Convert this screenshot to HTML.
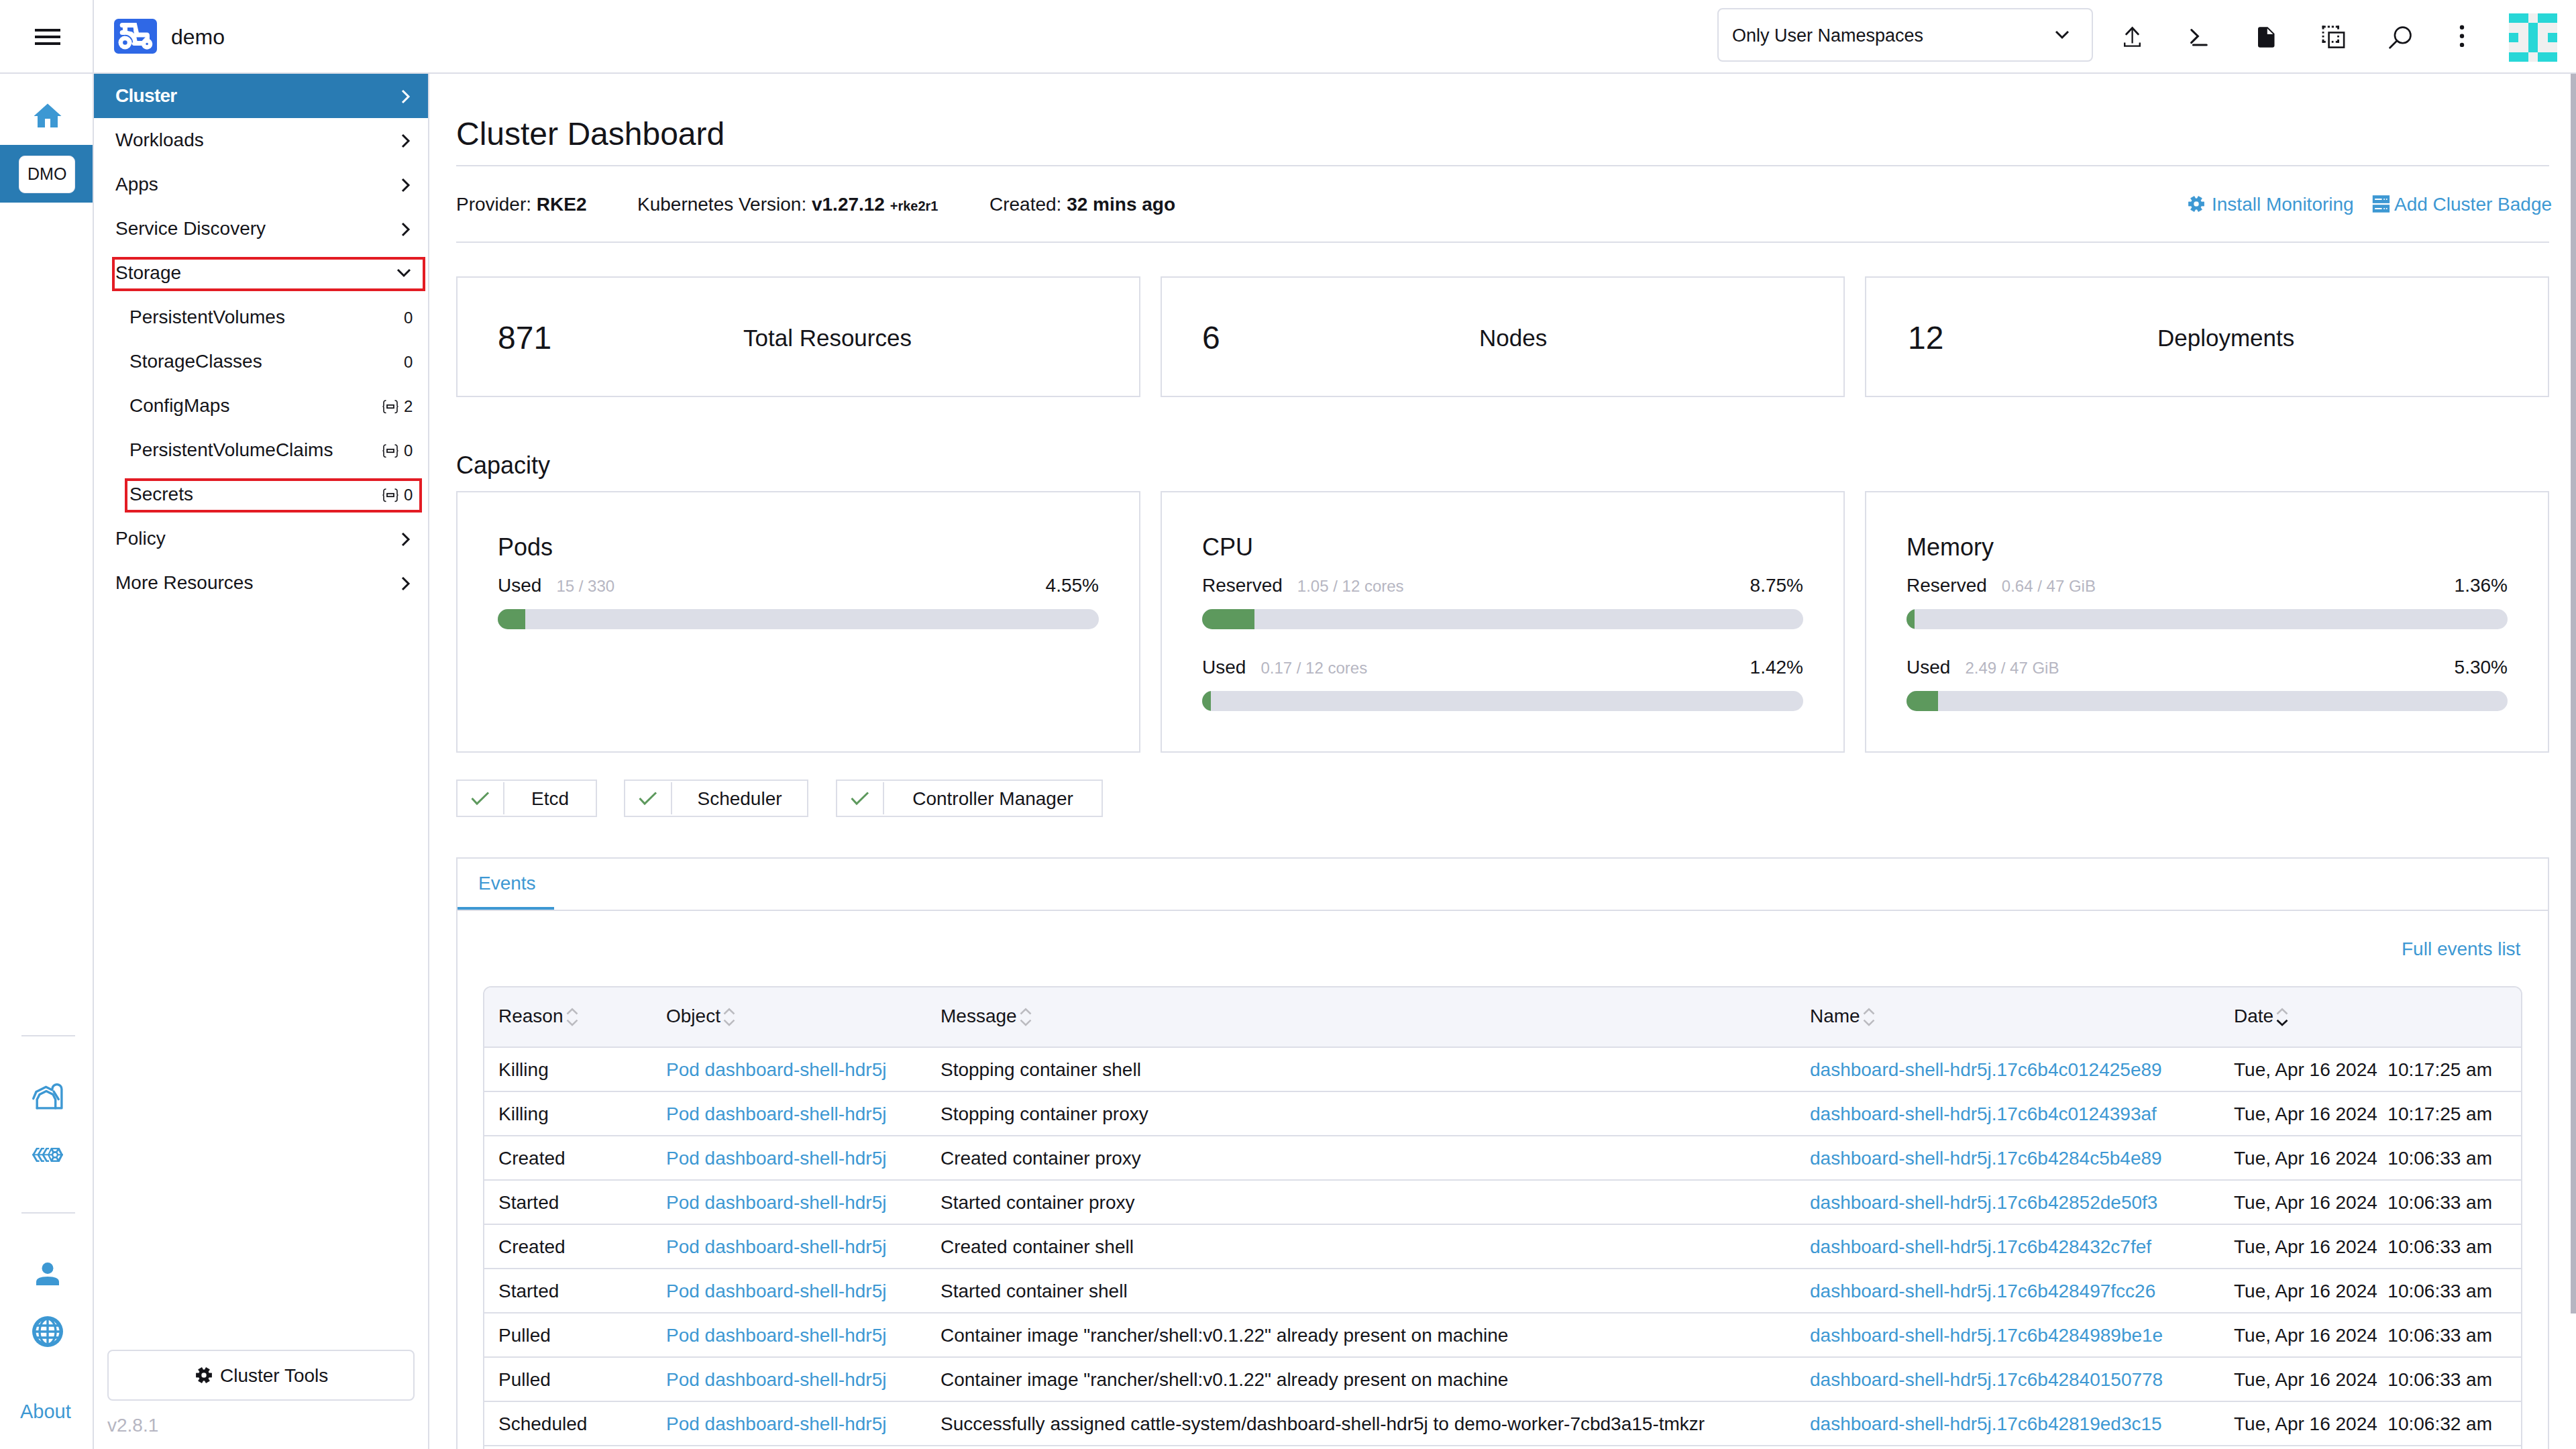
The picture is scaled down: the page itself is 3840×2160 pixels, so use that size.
<!DOCTYPE html>
<html><head><meta charset="utf-8">
<style>
*{box-sizing:border-box;margin:0;padding:0}
html,body{width:3840px;height:2160px;overflow:hidden;background:#fff}
body{position:relative;font-family:"Liberation Sans",sans-serif;color:#141419}
.a{position:absolute}
.t{position:absolute;white-space:nowrap;line-height:1}
.f28{font-size:28px}
.blue{color:#3d98d3}
.bd{border:2px solid #dcdee7}
svg{position:absolute;overflow:visible}
</style></head><body>
<!-- HEADER -->
<div class="a" style="left:0;top:108px;width:3840px;height:2px;background:#dcdee7"></div>
<div class="a" style="left:138px;top:0;width:2px;height:2160px;background:#dcdee7"></div>
<div class="a" style="left:52px;top:43px;width:38px;height:4px;background:#141419"></div>
<div class="a" style="left:52px;top:53px;width:38px;height:4px;background:#141419"></div>
<div class="a" style="left:52px;top:63px;width:38px;height:4px;background:#141419"></div>
<!-- logo -->
<svg style="left:170px;top:28px" width="64" height="52" viewBox="0 0 64 52">
<rect x="0" y="0" width="64" height="52" rx="6.5" fill="#2f68e6"/>
<g fill="#fff">
<rect x="8.7" y="5.9" width="25" height="7.1" rx="3.5"/>
<rect x="12.9" y="10" width="7.1" height="9"/>
<rect x="8.7" y="17" width="24" height="7" rx="3.5"/>
<polygon points="27.5,5.9 33.6,5.9 37,21 30,22"/>
<path d="M20,19 L36,20.5 L49,20.5 Q53,20.5 53,25 L53,34 L44,40 L30,40 Q26,40 26,34 Q26,26 16,24 Z"/>
<circle cx="16.4" cy="35.5" r="9.9"/>
<circle cx="49.1" cy="37.5" r="8.2"/>
</g>
<g fill="#2f68e6">
<circle cx="16.4" cy="35.5" r="3.3"/>
<circle cx="49.1" cy="37.5" r="1.8"/>
<polygon points="33.4,27.6 46.7,27.6 41.5,32.9 34.6,32.9"/>
<polygon points="20,13 28,13 30,22 27,19.5 20,18"/>
</g>
<path d="M16.4,24.6 A11,11 0 0 1 27.4,35.5" stroke="#2f68e6" stroke-width="1.6" fill="none"/>
</svg>
<div class="t" style="left:255px;top:39px;font-size:32px">demo</div>

<!-- namespace filter -->
<div class="a bd" style="left:2560px;top:12px;width:560px;height:80px;border-radius:8px"></div>
<div class="t" style="left:2582px;top:40px;font-size:27px">Only User Namespaces</div>
<svg style="left:3062px;top:44px" width="24" height="16"><path d="M3,3 L12,12 L21,3" stroke="#141419" stroke-width="3" fill="none"/></svg>

<!-- header icons -->
<svg style="left:3164px;top:38px" width="30" height="34"><g stroke="#141419" fill="none"><path d="M14.6,4 V26.5" stroke-width="2.3"/><path d="M5.6,13 L14.6,3.6 L23.4,13" stroke-width="2.8" stroke-linecap="round"/><path d="M3.2,25.6 V30.6 H25.8 V25.6" stroke-width="2.4"/></g></svg>
<svg style="left:3263px;top:41px" width="30" height="30"><g stroke="#141419" stroke-width="3" fill="none" stroke-linecap="round"><path d="M3.8,3.6 L13.4,12.9 L3.6,22.6"/><path d="M6.4,26 H26.3"/></g></svg>
<svg style="left:3365px;top:39px" width="28" height="34"><path d="M3.9,1.2 H15.4 L25.5,11.3 V28.8 Q25.5,31.8 22.5,31.8 H4 Q1,31.8 1,28.8 V4.2 Q1,1.2 3.9,1.2 Z" fill="#141419"/><path d="M14.8,3.4 V12 H23.4 Z" fill="#fff"/></svg>
<svg style="left:3459px;top:37px" width="38" height="38"><g fill="#141419"><rect x="2.6" y="1.4" width="5.2" height="2.9"/><rect x="2.6" y="1.4" width="2.9" height="5.2"/><rect x="10.8" y="1.4" width="3.2" height="2.9"/><rect x="16.8" y="1.4" width="3.2" height="2.9"/><rect x="22.8" y="1.4" width="5.2" height="2.9"/><rect x="25.1" y="1.4" width="2.9" height="5.2"/><rect x="2.6" y="10.2" width="2.9" height="2.5"/><rect x="2.6" y="16" width="2.9" height="2.6"/><rect x="2.6" y="21.8" width="2.9" height="5.0"/><rect x="2.6" y="23.9" width="5.2" height="2.9"/><rect x="25.1" y="16" width="2.9" height="2.6"/><rect x="25.1" y="21.8" width="2.9" height="5.0"/><rect x="22.8" y="23.9" width="5.2" height="2.9"/><rect x="16.8" y="23.9" width="2.7" height="2.9"/></g><rect x="12.6" y="11.5" width="22.5" height="22.1" fill="none" stroke="#141419" stroke-width="2.6"/></svg>
<svg style="left:3559px;top:36px" width="40" height="38"><g fill="none" stroke="#141419" stroke-width="2.6"><circle cx="22.7" cy="16.4" r="11.8"/><path d="M13.6,25.2 L3.6,35.2" stroke-width="2.8" stroke-linecap="round"/></g></svg>
<svg style="left:3664px;top:36px" width="14" height="38"><g fill="#141419"><circle cx="6" cy="4.7" r="3.2"/><circle cx="6" cy="17.8" r="3.2"/><circle cx="6" cy="30.9" r="3.2"/></g></svg>
<!-- avatar -->
<svg style="left:3740px;top:20px" width="72" height="72" viewBox="0 0 5 5" shape-rendering="crispEdges">
<rect width="5" height="5" fill="#f0f0f0"/>
<g fill="#28d7d7">
<rect x="0" y="0" width="2" height="1"/><rect x="3" y="0" width="2" height="1"/>
<rect x="2" y="0.99" width="1" height="3.02"/>
<rect x="0" y="2" width="1" height="1"/><rect x="4" y="2" width="1" height="1"/>
<rect x="0" y="4" width="2" height="1"/><rect x="3" y="4" width="2" height="1"/>
</g></svg>
<!-- scrollbar -->
<div class="a" style="left:3832px;top:110px;width:8px;height:1848px;background:#b6b5c1"></div>

<!-- LEFT RAIL -->
<svg style="left:50px;top:154px" width="42" height="37"><path d="M21,0.5 L41.5,19 H36 V36 H25 V23 H17 V36 H6 V19 H0.5 Z" fill="#3d98d3"/></svg>
<div class="a" style="left:0;top:216px;width:138px;height:86px;background:#297bb3"></div>
<div class="a" style="left:28px;top:232px;width:84px;height:56px;background:#fff;border-radius:9px;border:1px solid #e6e6ee"></div>
<div class="t" style="left:41px;top:247px;font-size:25px">DMO</div>

<div class="a" style="left:32px;top:1543px;width:80px;height:2px;background:#dcdee7"></div>
<div class="a" style="left:32px;top:1807px;width:80px;height:2px;background:#dcdee7"></div>
<svg style="left:46px;top:1612px" width="50" height="46"><g fill="none" stroke="#3d98d3" stroke-width="3.4" stroke-linejoin="round" stroke-linecap="round"><path d="M3.7,25.7 L8,15.5 L22.5,8.3 L30.5,12.3"/><path d="M34,15 L41.3,26.6"/><path d="M9.2,39.9 V27 L13,19.5 L23,14.5 L33,19.5 L36.7,27 V39.9"/><path d="M9.2,39.9 H45.9 V11.5 A7,7 0 0 0 31.9,11.5 V12.5"/></g></svg>
<svg style="left:47px;top:1709px" width="48" height="25"><g fill="#3d98d3"><polygon points="7.10,2.00 11.60,2.00 11.60,4.20 9.00,4.20 4.70,11.60 4.70,13.20 9.00,20.60 11.60,20.60 11.60,22.90 7.10,22.90 1.00,12.40"/><polygon points="14.35,2.00 18.85,2.00 18.85,4.20 16.25,4.20 11.95,11.60 11.95,13.20 16.25,20.60 18.85,20.60 18.85,22.90 14.35,22.90 8.25,12.40"/><polygon points="21.60,2.00 26.10,2.00 26.10,4.20 23.50,4.20 19.20,11.60 19.20,13.20 23.50,20.60 26.10,20.60 26.10,22.90 21.60,22.90 15.50,12.40"/><rect x="1" y="11.3" width="46" height="2"/><polygon points="24.00,12.40 28.90,2.00 41.60,2.00 47.00,12.40 41.60,22.90 28.90,22.90"/></g><g fill="#fff"><polygon points="32.00,4.20 38.00,4.20 36.70,7.10 33.20,7.10"/><polygon points="33.20,17.70 36.70,17.70 38.00,20.60 32.00,20.60"/><polygon points="29.60,6.00 31.00,8.60 30.00,11.20 26.80,11.20"/><polygon points="26.80,13.60 30.00,13.60 31.00,16.20 29.60,18.80"/><polygon points="40.20,6.30 43.00,11.20 40.00,11.20 38.60,8.60"/><polygon points="40.00,13.60 43.00,13.60 40.20,18.50 38.60,16.20"/><polygon points="32.20,12.50 33.40,10.00 36.60,10.00 37.80,12.50 36.60,15.00 33.40,15.00"/></g></svg>
<svg style="left:54px;top:1882px" width="35" height="35"><g fill="#3d98d3"><circle cx="17" cy="8.5" r="8.5"/><path d="M0,34 V29 Q0,21 17,21 Q34,21 34,29 V34 Z"/></g></svg>
<svg style="left:48px;top:1962px" width="46" height="46"><circle cx="23" cy="23" r="23" fill="#3d98d3"/><circle cx="23" cy="23" r="17.5" fill="#fff"/><g fill="none" stroke="#3d98d3" stroke-width="3.4"><ellipse cx="23" cy="23" rx="12" ry="19"/><path d="M23,3 V43 M3,14 H43 M3,23 H43 M3,32 H43"/></g></svg>
<div class="t blue" style="left:30px;top:2090px;font-size:29px">About</div>
<!-- PRODUCT NAV -->
<div class="a" style="left:638px;top:110px;width:2px;height:2050px;background:#dcdee7"></div>
<div class="a" style="left:140px;top:110px;width:498px;height:66px;background:#297bb3"></div>
<div class="t f28" style="left:172px;top:129px;color:#fff;font-weight:bold;letter-spacing:-0.7px">Cluster</div>
<div class="t f28" style="left:172px;top:195px">Workloads</div>
<div class="t f28" style="left:172px;top:261px">Apps</div>
<div class="t f28" style="left:172px;top:327px">Service Discovery</div>
<div class="t f28" style="left:172px;top:393px">Storage</div>
<div class="t f28" style="left:193px;top:459px">PersistentVolumes</div>
<div class="t f28" style="left:193px;top:525px">StorageClasses</div>
<div class="t f28" style="left:193px;top:591px">ConfigMaps</div>
<div class="t f28" style="left:193px;top:657px">PersistentVolumeClaims</div>
<div class="t f28" style="left:193px;top:723px">Secrets</div>
<div class="t f28" style="left:172px;top:789px">Policy</div>
<div class="t f28" style="left:172px;top:855px">More Resources</div>
<!-- chevrons -->
<svg style="left:596px;top:132px" width="18" height="24"><path d="M4,3 L13,12 L4,21" stroke="#fff" stroke-width="3" fill="none"/></svg>
<svg style="left:596px;top:198px" width="18" height="24"><path d="M4,3 L13,12 L4,21" stroke="#141419" stroke-width="3" fill="none"/></svg>
<svg style="left:596px;top:264px" width="18" height="24"><path d="M4,3 L13,12 L4,21" stroke="#141419" stroke-width="3" fill="none"/></svg>
<svg style="left:596px;top:330px" width="18" height="24"><path d="M4,3 L13,12 L4,21" stroke="#141419" stroke-width="3" fill="none"/></svg>
<svg style="left:590px;top:399px" width="24" height="16"><path d="M3,3 L12,12 L21,3" stroke="#141419" stroke-width="3" fill="none"/></svg>
<svg style="left:596px;top:792px" width="18" height="24"><path d="M4,3 L13,12 L4,21" stroke="#141419" stroke-width="3" fill="none"/></svg>
<svg style="left:596px;top:858px" width="18" height="24"><path d="M4,3 L13,12 L4,21" stroke="#141419" stroke-width="3" fill="none"/></svg>
<!-- counts -->
<div class="t" style="left:602px;top:462px;font-size:24px">0</div>
<div class="t" style="left:602px;top:528px;font-size:24px">0</div>
<div class="t" style="left:602px;top:594px;font-size:24px">2</div>
<div class="t" style="left:602px;top:660px;font-size:24px">0</div>
<div class="t" style="left:602px;top:726px;font-size:24px">0</div>
<svg style="left:570px;top:596px" width="24" height="21"><g fill="none" stroke="#141419" stroke-width="1.6"><path d="M5.5,1 Q2,1 2,4 V8.5 Q2,10 0.5,10 Q2,10 2,11.5 V16.5 Q2,19.5 5.5,19.5"/><path d="M18.5,1 Q22,1 22,4 V8.5 Q22,10 23.5,10 Q22,10 22,11.5 V16.5 Q22,19.5 18.5,19.5"/><rect x="7" y="7.8" width="10" height="4.4" stroke-width="1.8"/></g></svg>
<svg style="left:570px;top:662px" width="24" height="21"><g fill="none" stroke="#141419" stroke-width="1.6"><path d="M5.5,1 Q2,1 2,4 V8.5 Q2,10 0.5,10 Q2,10 2,11.5 V16.5 Q2,19.5 5.5,19.5"/><path d="M18.5,1 Q22,1 22,4 V8.5 Q22,10 23.5,10 Q22,10 22,11.5 V16.5 Q22,19.5 18.5,19.5"/><rect x="7" y="7.8" width="10" height="4.4" stroke-width="1.8"/></g></svg>
<svg style="left:570px;top:728px" width="24" height="21"><g fill="none" stroke="#141419" stroke-width="1.6"><path d="M5.5,1 Q2,1 2,4 V8.5 Q2,10 0.5,10 Q2,10 2,11.5 V16.5 Q2,19.5 5.5,19.5"/><path d="M18.5,1 Q22,1 22,4 V8.5 Q22,10 23.5,10 Q22,10 22,11.5 V16.5 Q22,19.5 18.5,19.5"/><rect x="7" y="7.8" width="10" height="4.4" stroke-width="1.8"/></g></svg>
<!-- red highlight boxes -->
<div class="a" style="left:167px;top:383px;width:467px;height:51px;border:4.5px solid #e31c24"></div>
<div class="a" style="left:186px;top:713px;width:443px;height:51px;border:4.5px solid #e31c24"></div>
<!-- cluster tools -->
<div class="a bd" style="left:160px;top:2012px;width:458px;height:76px;border-radius:8px"></div>
<svg style="left:290px;top:2036px" width="28" height="28" viewBox="0 0 28 28"><path d="M21.66,11.06 L25.49,10.92 L25.49,17.08 L21.66,16.94 L20.84,17.95 L20.37,19.16 L22.41,22.41 L17.08,25.49 L15.28,22.10 L14.00,21.90 L12.72,22.10 L10.92,25.49 L5.59,22.41 L7.63,19.16 L7.16,17.95 L6.34,16.94 L2.51,17.08 L2.51,10.92 L6.34,11.06 L7.16,10.05 L7.63,8.84 L5.59,5.59 L10.92,2.51 L12.72,5.90 L14.00,6.10 L15.28,5.90 L17.08,2.51 L22.41,5.59 L20.37,8.84 L20.84,10.05Z M14,9.9 A4.1,4.1 0 1 0 14,18.1 A4.1,4.1 0 1 0 14,9.9 Z" fill="#141419" fill-rule="evenodd" stroke="#141419" stroke-width="0.8" stroke-linejoin="round"/></svg>
<div class="t f28" style="left:328px;top:2037px">Cluster Tools</div>
<div class="t f28" style="left:160px;top:2111px;color:#b6b6c2">v2.8.1</div>
<!-- MAIN -->
<div class="t" style="left:680px;top:176px;font-size:48px">Cluster Dashboard</div>
<div class="a" style="left:680px;top:246px;width:3120px;height:2px;background:#dcdee7"></div>
<div class="t f28" style="left:680px;top:291px">Provider: <b>RKE2</b></div>
<div class="t f28" style="left:950px;top:291px">Kubernetes Version: <b>v1.27.12</b> <b style="font-size:20px">+rke2r1</b></div>
<div class="t f28" style="left:1475px;top:291px">Created: <b>32 mins ago</b></div>
<svg style="left:3260px;top:290px" width="28" height="28" viewBox="0 0 28 28"><path d="M21.66,11.06 L25.49,10.92 L25.49,17.08 L21.66,16.94 L20.84,17.95 L20.37,19.16 L22.41,22.41 L17.08,25.49 L15.28,22.10 L14.00,21.90 L12.72,22.10 L10.92,25.49 L5.59,22.41 L7.63,19.16 L7.16,17.95 L6.34,16.94 L2.51,17.08 L2.51,10.92 L6.34,11.06 L7.16,10.05 L7.63,8.84 L5.59,5.59 L10.92,2.51 L12.72,5.90 L14.00,6.10 L15.28,5.90 L17.08,2.51 L22.41,5.59 L20.37,8.84 L20.84,10.05Z M14,9.9 A4.1,4.1 0 1 0 14,18.1 A4.1,4.1 0 1 0 14,9.9 Z" fill="#3d98d3" fill-rule="evenodd" stroke="#3d98d3" stroke-width="0.8" stroke-linejoin="round"/></svg>
<div class="t f28 blue" style="left:3297px;top:291px">Install Monitoring</div>
<svg style="left:3536px;top:291px" width="27" height="26"><g fill="#3d98d3"><rect x="0.8" y="0.2" width="25.3" height="11.7"/><rect x="0.8" y="14.2" width="25.3" height="11.5"/></g><g fill="#fff"><rect x="3.9" y="4.9" width="11" height="2.1" rx="1"/><circle cx="18.1" cy="6" r="1.1"/><circle cx="21.7" cy="6" r="1.1"/><rect x="3.9" y="18.9" width="11" height="2.1" rx="1"/><circle cx="18.1" cy="20" r="1.1"/><circle cx="21.7" cy="20" r="1.1"/></g></svg>
<div class="t f28 blue" style="left:3569px;top:291px">Add Cluster Badge</div>
<div class="a" style="left:680px;top:360px;width:3120px;height:2px;background:#dcdee7"></div>

<!-- count boxes -->
<div class="a bd" style="left:680px;top:412px;width:1020px;height:180px"></div>
<div class="a bd" style="left:1730px;top:412px;width:1020px;height:180px"></div>
<div class="a bd" style="left:2780px;top:412px;width:1020px;height:180px"></div>
<div class="t" style="left:742px;top:480px;font-size:48px">871</div>
<div class="t" style="left:1108px;top:486px;font-size:35px">Total Resources</div>
<div class="t" style="left:1792px;top:480px;font-size:48px">6</div>
<div class="t" style="left:2205px;top:486px;font-size:35px">Nodes</div>
<div class="t" style="left:2844px;top:480px;font-size:48px">12</div>
<div class="t" style="left:3216px;top:486px;font-size:35px">Deployments</div>

<div class="t" style="left:680px;top:676px;font-size:36px">Capacity</div>
<div class="a bd" style="left:680px;top:732px;width:1020px;height:390px"></div>
<div class="a bd" style="left:1730px;top:732px;width:1020px;height:390px"></div>
<div class="a bd" style="left:2780px;top:732px;width:1020px;height:390px"></div>
<div class="t" style="left:742px;top:798px;font-size:36px">Pods</div>
<div class="t f28" style="left:742px;top:859px">Used<span style="font-size:24px;color:#b6b6c2;margin-left:22px">15 / 330</span></div>
<div class="t f28" style="left:742px;width:896px;text-align:right;top:859px">4.55%</div>
<div class="a" style="left:742px;top:908px;width:896px;height:30px;border-radius:15px;background:#dcdee7;overflow:hidden"><div style="width:41px;height:30px;background:#5d995d"></div></div>
<div class="t" style="left:1792px;top:798px;font-size:36px">CPU</div>
<div class="t f28" style="left:1792px;top:859px">Reserved<span style="font-size:24px;color:#b6b6c2;margin-left:22px">1.05 / 12 cores</span></div>
<div class="t f28" style="left:1792px;width:896px;text-align:right;top:859px">8.75%</div>
<div class="a" style="left:1792px;top:908px;width:896px;height:30px;border-radius:15px;background:#dcdee7;overflow:hidden"><div style="width:78px;height:30px;background:#5d995d"></div></div>
<div class="t f28" style="left:1792px;top:981px">Used<span style="font-size:24px;color:#b6b6c2;margin-left:22px">0.17 / 12 cores</span></div>
<div class="t f28" style="left:1792px;width:896px;text-align:right;top:981px">1.42%</div>
<div class="a" style="left:1792px;top:1030px;width:896px;height:30px;border-radius:15px;background:#dcdee7;overflow:hidden"><div style="width:13px;height:30px;background:#5d995d"></div></div>
<div class="t" style="left:2842px;top:798px;font-size:36px">Memory</div>
<div class="t f28" style="left:2842px;top:859px">Reserved<span style="font-size:24px;color:#b6b6c2;margin-left:22px">0.64 / 47 GiB</span></div>
<div class="t f28" style="left:2842px;width:896px;text-align:right;top:859px">1.36%</div>
<div class="a" style="left:2842px;top:908px;width:896px;height:30px;border-radius:15px;background:#dcdee7;overflow:hidden"><div style="width:12px;height:30px;background:#5d995d"></div></div>
<div class="t f28" style="left:2842px;top:981px">Used<span style="font-size:24px;color:#b6b6c2;margin-left:22px">2.49 / 47 GiB</span></div>
<div class="t f28" style="left:2842px;width:896px;text-align:right;top:981px">5.30%</div>
<div class="a" style="left:2842px;top:1030px;width:896px;height:30px;border-radius:15px;background:#dcdee7;overflow:hidden"><div style="width:47px;height:30px;background:#5d995d"></div></div>
<div class="a bd" style="left:680px;top:1162px;width:210px;height:56px"></div>
<div class="a" style="left:750px;top:1166px;width:2px;height:48px;background:#dcdee7"></div>
<svg style="left:701px;top:1179px" width="30" height="22"><path d="M2.5,11 L10,19 L27,2.5" stroke="#5d995d" stroke-width="3" fill="none"/></svg>
<div class="t f28" style="left:752px;width:136px;text-align:center;top:1177px">Etcd</div>
<div class="a bd" style="left:930px;top:1162px;width:275px;height:56px"></div>
<div class="a" style="left:1000px;top:1166px;width:2px;height:48px;background:#dcdee7"></div>
<svg style="left:951px;top:1179px" width="30" height="22"><path d="M2.5,11 L10,19 L27,2.5" stroke="#5d995d" stroke-width="3" fill="none"/></svg>
<div class="t f28" style="left:1002px;width:201px;text-align:center;top:1177px">Scheduler</div>
<div class="a bd" style="left:1246px;top:1162px;width:398px;height:56px"></div>
<div class="a" style="left:1316px;top:1166px;width:2px;height:48px;background:#dcdee7"></div>
<svg style="left:1267px;top:1179px" width="30" height="22"><path d="M2.5,11 L10,19 L27,2.5" stroke="#5d995d" stroke-width="3" fill="none"/></svg>
<div class="t f28" style="left:1318px;width:324px;text-align:center;top:1177px">Controller Manager</div>
<div class="a bd" style="left:680px;top:1278px;width:3120px;height:1000px"></div>
<div class="t f28 blue" style="left:713px;top:1303px">Events</div>
<div class="a" style="left:682px;top:1356px;width:3116px;height:2px;background:#dcdee7"></div>
<div class="a" style="left:682px;top:1352px;width:144px;height:4px;background:#3d98d3"></div>
<div class="t f28 blue" style="left:3580px;top:1401px">Full events list</div>
<div class="a" style="left:720px;top:1470px;width:3040px;height:800px;border:2px solid #dcdee7;border-radius:12px 12px 0 0"></div>
<div class="a" style="left:722px;top:1472px;width:3036px;height:88px;background:#f4f5fa;border-radius:10px 10px 0 0"></div>
<div class="a" style="left:722px;top:1560px;width:3036px;height:2px;background:#dcdee7"></div>
<div class="t f28" style="left:743px;top:1501px">Reason</div>

<div class="t f28" style="left:993px;top:1501px">Object</div>

<div class="t f28" style="left:1402px;top:1501px">Message</div>

<div class="t f28" style="left:2698px;top:1501px">Name</div>

<div class="t f28" style="left:3330px;top:1501px">Date</div>

<div class="t f28" style="left:743px;top:1581px">Killing</div>
<div class="t f28 blue" style="left:993px;top:1581px">Pod dashboard-shell-hdr5j</div>
<div class="t f28" style="left:1402px;top:1581px">Stopping container shell</div>
<div class="t f28 blue" style="left:2698px;top:1581px">dashboard-shell-hdr5j.17c6b4c012425e89</div>
<div class="t f28" style="left:3330px;top:1581px">Tue, Apr 16 2024&nbsp; 10:17:25 am</div>
<div class="a" style="left:722px;top:1626px;width:3036px;height:2px;background:#dcdee7"></div>
<div class="t f28" style="left:743px;top:1647px">Killing</div>
<div class="t f28 blue" style="left:993px;top:1647px">Pod dashboard-shell-hdr5j</div>
<div class="t f28" style="left:1402px;top:1647px">Stopping container proxy</div>
<div class="t f28 blue" style="left:2698px;top:1647px">dashboard-shell-hdr5j.17c6b4c0124393af</div>
<div class="t f28" style="left:3330px;top:1647px">Tue, Apr 16 2024&nbsp; 10:17:25 am</div>
<div class="a" style="left:722px;top:1692px;width:3036px;height:2px;background:#dcdee7"></div>
<div class="t f28" style="left:743px;top:1713px">Created</div>
<div class="t f28 blue" style="left:993px;top:1713px">Pod dashboard-shell-hdr5j</div>
<div class="t f28" style="left:1402px;top:1713px">Created container proxy</div>
<div class="t f28 blue" style="left:2698px;top:1713px">dashboard-shell-hdr5j.17c6b4284c5b4e89</div>
<div class="t f28" style="left:3330px;top:1713px">Tue, Apr 16 2024&nbsp; 10:06:33 am</div>
<div class="a" style="left:722px;top:1758px;width:3036px;height:2px;background:#dcdee7"></div>
<div class="t f28" style="left:743px;top:1779px">Started</div>
<div class="t f28 blue" style="left:993px;top:1779px">Pod dashboard-shell-hdr5j</div>
<div class="t f28" style="left:1402px;top:1779px">Started container proxy</div>
<div class="t f28 blue" style="left:2698px;top:1779px">dashboard-shell-hdr5j.17c6b42852de50f3</div>
<div class="t f28" style="left:3330px;top:1779px">Tue, Apr 16 2024&nbsp; 10:06:33 am</div>
<div class="a" style="left:722px;top:1824px;width:3036px;height:2px;background:#dcdee7"></div>
<div class="t f28" style="left:743px;top:1845px">Created</div>
<div class="t f28 blue" style="left:993px;top:1845px">Pod dashboard-shell-hdr5j</div>
<div class="t f28" style="left:1402px;top:1845px">Created container shell</div>
<div class="t f28 blue" style="left:2698px;top:1845px">dashboard-shell-hdr5j.17c6b428432c7fef</div>
<div class="t f28" style="left:3330px;top:1845px">Tue, Apr 16 2024&nbsp; 10:06:33 am</div>
<div class="a" style="left:722px;top:1890px;width:3036px;height:2px;background:#dcdee7"></div>
<div class="t f28" style="left:743px;top:1911px">Started</div>
<div class="t f28 blue" style="left:993px;top:1911px">Pod dashboard-shell-hdr5j</div>
<div class="t f28" style="left:1402px;top:1911px">Started container shell</div>
<div class="t f28 blue" style="left:2698px;top:1911px">dashboard-shell-hdr5j.17c6b428497fcc26</div>
<div class="t f28" style="left:3330px;top:1911px">Tue, Apr 16 2024&nbsp; 10:06:33 am</div>
<div class="a" style="left:722px;top:1956px;width:3036px;height:2px;background:#dcdee7"></div>
<div class="t f28" style="left:743px;top:1977px">Pulled</div>
<div class="t f28 blue" style="left:993px;top:1977px">Pod dashboard-shell-hdr5j</div>
<div class="t f28" style="left:1402px;top:1977px">Container image "rancher/shell:v0.1.22" already present on machine</div>
<div class="t f28 blue" style="left:2698px;top:1977px">dashboard-shell-hdr5j.17c6b4284989be1e</div>
<div class="t f28" style="left:3330px;top:1977px">Tue, Apr 16 2024&nbsp; 10:06:33 am</div>
<div class="a" style="left:722px;top:2022px;width:3036px;height:2px;background:#dcdee7"></div>
<div class="t f28" style="left:743px;top:2043px">Pulled</div>
<div class="t f28 blue" style="left:993px;top:2043px">Pod dashboard-shell-hdr5j</div>
<div class="t f28" style="left:1402px;top:2043px">Container image "rancher/shell:v0.1.22" already present on machine</div>
<div class="t f28 blue" style="left:2698px;top:2043px">dashboard-shell-hdr5j.17c6b42840150778</div>
<div class="t f28" style="left:3330px;top:2043px">Tue, Apr 16 2024&nbsp; 10:06:33 am</div>
<div class="a" style="left:722px;top:2088px;width:3036px;height:2px;background:#dcdee7"></div>
<div class="t f28" style="left:743px;top:2109px">Scheduled</div>
<div class="t f28 blue" style="left:993px;top:2109px">Pod dashboard-shell-hdr5j</div>
<div class="t f28" style="left:1402px;top:2109px">Successfully assigned cattle-system/dashboard-shell-hdr5j to demo-worker-7cbd3a15-tmkzr</div>
<div class="t f28 blue" style="left:2698px;top:2109px">dashboard-shell-hdr5j.17c6b42819ed3c15</div>
<div class="t f28" style="left:3330px;top:2109px">Tue, Apr 16 2024&nbsp; 10:06:32 am</div>
<div class="a" style="left:722px;top:2154px;width:3036px;height:2px;background:#dcdee7"></div>
<svg style="left:844px;top:1502px" width="20" height="28"><path d="M1.5,9.5 L9,2.3 L16.5,9.5" stroke="#bbbbc0" stroke-width="2.5" fill="none"/><path d="M1.5,18.7 L9,25.9 L16.5,18.7" stroke="#bbbbc0" stroke-width="2.5" fill="none"/></svg>
<svg style="left:1078px;top:1502px" width="20" height="28"><path d="M1.5,9.5 L9,2.3 L16.5,9.5" stroke="#bbbbc0" stroke-width="2.5" fill="none"/><path d="M1.5,18.7 L9,25.9 L16.5,18.7" stroke="#bbbbc0" stroke-width="2.5" fill="none"/></svg>
<svg style="left:1520px;top:1502px" width="20" height="28"><path d="M1.5,9.5 L9,2.3 L16.5,9.5" stroke="#bbbbc0" stroke-width="2.5" fill="none"/><path d="M1.5,18.7 L9,25.9 L16.5,18.7" stroke="#bbbbc0" stroke-width="2.5" fill="none"/></svg>
<svg style="left:2777px;top:1502px" width="20" height="28"><path d="M1.5,9.5 L9,2.3 L16.5,9.5" stroke="#bbbbc0" stroke-width="2.5" fill="none"/><path d="M1.5,18.7 L9,25.9 L16.5,18.7" stroke="#bbbbc0" stroke-width="2.5" fill="none"/></svg>
<svg style="left:3393px;top:1502px" width="20" height="28"><path d="M1.5,9.5 L9,2.3 L16.5,9.5" stroke="#bbbbc0" stroke-width="2.5" fill="none"/><path d="M1.5,18.7 L9,25.9 L16.5,18.7" stroke="#141419" stroke-width="2.8" fill="none"/></svg>
</body></html>
